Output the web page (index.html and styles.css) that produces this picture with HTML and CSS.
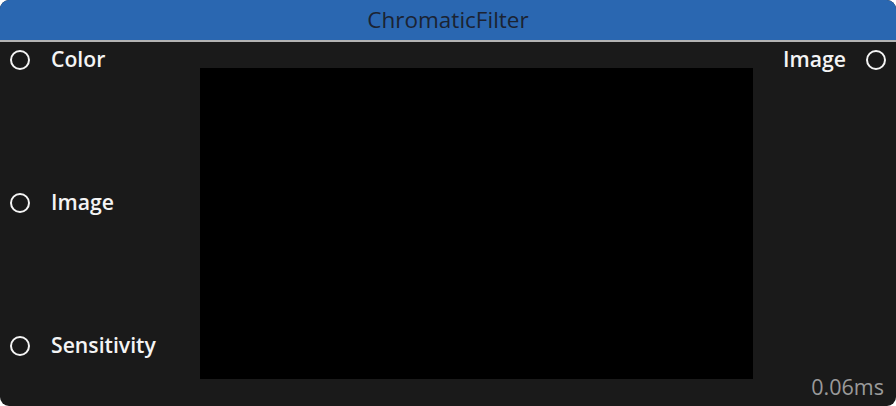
FILE: index.html
```html
<!DOCTYPE html>
<html>
<head>
<meta charset="utf-8">
<link rel="stylesheet" href="styles.css">
</head>
<body>
<div class="node">
  <div class="header">ChromaticFilter</div>
  <div class="content">
    <div class="inputs">
      <div class="pin"><span class="dot"></span><span class="label">Color</span></div>
      <div class="pin"><span class="dot"></span><span class="label">Image</span></div>
      <div class="pin"><span class="dot"></span><span class="label">Sensitivity</span></div>
    </div>
    <div class="preview"></div>
    <div class="outputs">
      <div class="pin out"><span class="label">Image</span><span class="dot"></span></div>
      <div class="time">0.06ms</div>
    </div>
  </div>
</div>
</body>
</html>
```
FILE: styles.css
```css
html, body {
  margin: 0;
  padding: 0;
  background: #ffffff;
}
.node {
  width: 896px;
  height: 406px;
  border-radius: 9px;
  overflow: hidden;
  background: #1a1a1a;
  display: flex;
  flex-direction: column;
  font-family: "Open Sans", "Noto Sans", sans-serif;
}
.header {
  height: 40px;
  background: #2a67b1;
  border-bottom: 2px solid #b3b3b3;
  color: #1b2332;
  font-size: 22.5px;
  line-height: 40px;
  text-align: center;
}
.content {
  flex: 1;
  display: grid;
  grid-template-columns: 200px 553px 1fr;
}
.inputs {
  display: flex;
  flex-direction: column;
  gap: 108px;
}
.pin {
  height: 35px;
  display: flex;
  align-items: center;
  color: #f4f4f4;
  font-size: 21.2px;
  font-weight: 600;
}
.label {
  position: relative;
  top: -1px;
}
.dot {
  width: 16px;
  height: 16px;
  border: 2px solid #f4f4f4;
  border-radius: 50%;
  box-sizing: content-box;
  flex: none;
}
.inputs .dot {
  margin-left: 10px;
  margin-right: 21px;
}
.preview {
  margin-top: 26px;
  margin-bottom: 27px;
  background: #000000;
}
.outputs {
  display: flex;
  flex-direction: column;
  justify-content: space-between;
  align-items: flex-end;
}
.out .dot {
  margin-left: 20px;
  margin-right: 10px;
}
.time {
  color: #9a9a9a;
  font-size: 21.5px;
  padding-right: 12px;
  padding-bottom: 5px;
}
```
